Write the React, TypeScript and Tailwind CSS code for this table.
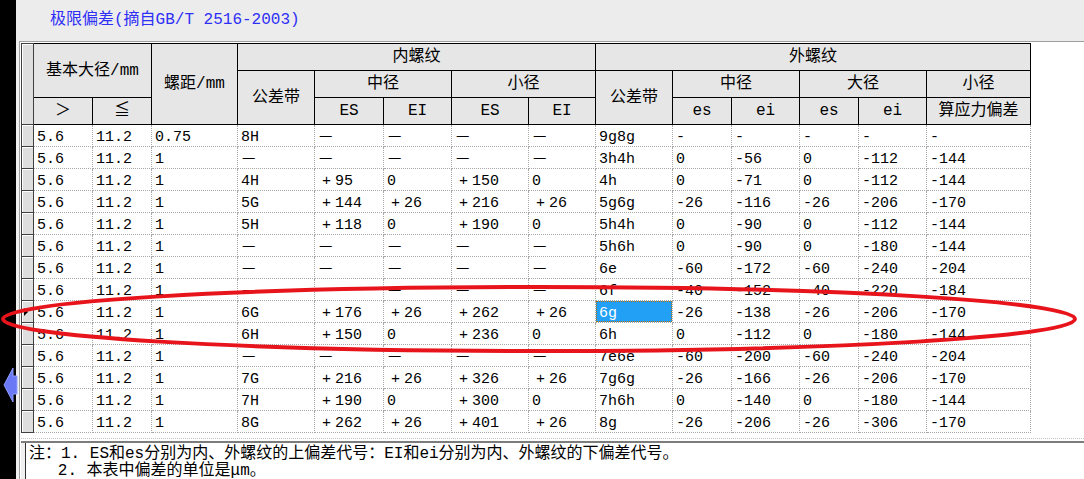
import React from 'react';

// column widths taken from the grid lines of the original sheet
const colWidths = [12, 59, 59, 86, 77, 69, 68, 77, 67, 77, 59, 68, 59, 68, 104];

const D = '—';

const rows: string[][] = [
    ['5.6', '11.2', '0.75', '8H', D, D, D, D, '9g8g', '-', '-', '-', '-', '-'],
    ['5.6', '11.2', '1', D, D, D, D, D, '3h4h', '0', '-56', '0', '-112', '-144'],
    ['5.6', '11.2', '1', '4H', '+95', '0', '+150', '0', '4h', '0', '-71', '0', '-112', '-144'],
    ['5.6', '11.2', '1', '5G', '+144', '+26', '+216', '+26', '5g6g', '-26', '-116', '-26', '-206', '-170'],
    ['5.6', '11.2', '1', '5H', '+118', '0', '+190', '0', '5h4h', '0', '-90', '0', '-112', '-144'],
    ['5.6', '11.2', '1', D, D, D, D, D, '5h6h', '0', '-90', '0', '-180', '-144'],
    ['5.6', '11.2', '1', D, D, D, D, D, '6e', '-60', '-172', '-60', '-240', '-204'],
    ['5.6', '11.2', '1', D, D, D, D, D, '6f', '-40', '-152', '-40', '-220', '-184'],
    ['5.6', '11.2', '1', '6G', '+176', '+26', '+262', '+26', '6g', '-26', '-138', '-26', '-206', '-170'],
    ['5.6', '11.2', '1', '6H', '+150', '0', '+236', '0', '6h', '0', '-112', '0', '-180', '-144'],
    ['5.6', '11.2', '1', D, D, D, D, D, '7e6e', '-60', '-200', '-60', '-240', '-204'],
    ['5.6', '11.2', '1', '7G', '+216', '+26', '+326', '+26', '7g6g', '-26', '-166', '-26', '-206', '-170'],
    ['5.6', '11.2', '1', '7H', '+190', '0', '+300', '0', '7h6h', '0', '-140', '0', '-180', '-144'],
    ['5.6', '11.2', '1', '8G', '+262', '+26', '+401', '+26', '8g', '-26', '-206', '-26', '-306', '-170'],
];

const SELECTED_ROW = 8;
const SELECTED_COL = 8;

const th = 'border border-black bg-[#e6e6e6] font-normal text-[16px] leading-none p-0 text-center text-black';
const td = 'border border-dotted border-[#a8a8a8] h-[22px] p-0 pl-[3px] text-[15px] leading-[15px] whitespace-nowrap text-black';

function CellText({ value }: { value: string }) {
    if (value === D) {
        return <span className="inline-block pl-[1px] font-['Noto_Sans_CJK_SC',sans-serif] leading-[15px]">—</span>;
    }
    if (value.startsWith('+')) {
        return (
            <span className="relative top-[2px] pl-[4px]">
                <span className="mr-[4px]">+</span>
                {value.slice(1)}
            </span>
        );
    }
    return <span className="relative top-[2px]">{value}</span>;
}

export default function App() {
    return (
        <div className="relative w-[1084px] h-[479px] overflow-hidden bg-white flex font-['Liberation_Mono','Noto_Sans_CJK_SC',monospace]">
            {/* black strip on the left */}
            <div className="w-[16px] h-full bg-black shrink-0" />

            <div className="flex-1 flex flex-col">
                {/* title */}
                <div className="h-[41px] shrink-0 bg-[#ececec] flex items-center pl-[34px] pb-[2px] text-[16px] text-[#2f2ff5]">
                    极限偏差(摘自GB/T 2516-2003)
                </div>

                <div className="flex-1 flex flex-col bg-[#f0f0f0] pl-[3px]">
                    <div className="flex-1 flex flex-col bg-white border-l border-t border-[#a0a0a0] pl-[1px] pt-[1px]">
                        <table className="table-fixed border-collapse w-[1009px]">
                            <colgroup>
                                {colWidths.map((w, i) => (
                                    <col key={i} style={{ width: w }} />
                                ))}
                            </colgroup>
                            <thead>
                                <tr className="h-[27px]">
                                    <th rowSpan={3} className="border border-[#404040] bg-[#dedede] p-0 shadow-[inset_1px_1px_0_#fff]" />
                                    <th colSpan={2} rowSpan={2} className={th}>基本大径/mm</th>
                                    <th rowSpan={3} className={th}>螺距/mm</th>
                                    <th colSpan={5} className={th}>内螺纹</th>
                                    <th colSpan={6} className={th}>外螺纹</th>
                                </tr>
                                <tr className="h-[27px]">
                                    <th rowSpan={2} className={th}>公差带</th>
                                    <th colSpan={2} className={th}>中径</th>
                                    <th colSpan={2} className={th}>小径</th>
                                    <th rowSpan={2} className={th}>公差带</th>
                                    <th colSpan={2} className={th}>中径</th>
                                    <th colSpan={2} className={th}>大径</th>
                                    <th className={th}>小径</th>
                                </tr>
                                <tr className="h-[27px]">
                                    <th className={th}>＞</th>
                                    <th className={th}>≦</th>
                                    <th className={th}>ES</th>
                                    <th className={th}>EI</th>
                                    <th className={th}>ES</th>
                                    <th className={th}>EI</th>
                                    <th className={th}>es</th>
                                    <th className={th}>ei</th>
                                    <th className={th}>es</th>
                                    <th className={th}>ei</th>
                                    <th className={th}>算应力偏差</th>
                                </tr>
                            </thead>
                            <tbody>
                                {rows.map((row, r) => (
                                    <tr key={r} className="h-[22px]">
                                        <td className="border border-[#404040] bg-[#dedede] p-0 shadow-[inset_1px_1px_0_#fff]">
                                            {r === SELECTED_ROW && (
                                                <div className="ml-[2px] w-0 h-0 border-y-[4px] border-y-transparent border-l-[4px] border-l-black" />
                                            )}
                                        </td>
                                        {row.map((v, c) =>
                                            r === SELECTED_ROW && c === SELECTED_COL ? (
                                                <td key={c} className="border border-dotted border-[#a8a8a8] h-[22px] p-0">
                                                    <div className="h-[21px] bg-[#22a0f5] border border-dotted border-[#b06a00] text-white text-[15px] leading-none pl-[2px] pt-[3px] flex items-center">
                                                        {v}
                                                    </div>
                                                </td>
                                            ) : (
                                                <td key={c} className={td}>
                                                    <CellText value={v} />
                                                </td>
                                            )
                                        )}
                                    </tr>
                                ))}
                            </tbody>
                        </table>

                        <div className="h-[5px] shrink-0" />
                        <div className="border-t border-dotted border-[#c4c4c4]" />
                        <div className="h-[2px] shrink-0" />
                        <div className="border-t-2 border-[#7c7c7c]" />

                        {/* notes */}
                        <div className="flex-1 flex bg-[#f0f0f0]">
                            <div className="w-[4px]" />
                            <div className="flex-1 bg-white border-l border-[#303030] pl-[3px] pt-[3px] text-[16px] leading-[17px] text-black whitespace-pre">
                                <div>注：1. ES和es分别为内、外螺纹的上偏差代号：EI和ei分别为内、外螺纹的下偏差代号。</div>
                                <div>   2. 本表中偏差的单位是μm。</div>
                            </div>
                        </div>
                    </div>
                </div>
            </div>

            {/* blue scroll arrow over the black strip */}
            <svg className="absolute left-0 top-[364px]" width="20" height="40" viewBox="0 0 20 40">
                <polygon points="4,21 13,4 13,12 17,12 17,30 13,30 13,38" fill="#6a78f5" stroke="#8f9cff" strokeWidth="1" />
            </svg>

            {/* red hand-drawn ring */}
            <svg className="absolute inset-0 pointer-events-none" width="1084" height="479" viewBox="0 0 1084 479">
                <ellipse cx="539" cy="319" rx="536" ry="32" fill="none" stroke="#e8141c" strokeWidth="4" />
            </svg>
        </div>
    );
}
